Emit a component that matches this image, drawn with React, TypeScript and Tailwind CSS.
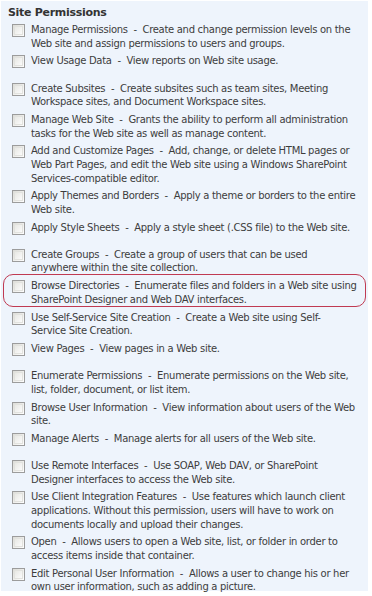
import React from 'react';

interface Permission {
  name: string;
  lines: string[];
  highlight?: boolean;
}

// wraps copied from the screenshot so lines break in the same places
const permissions: Permission[] = [
  { name: 'Manage Permissions', lines: ['Create and change permission levels on the', 'Web site and assign permissions to users and groups.'] },
  { name: 'View Usage Data', lines: ['View reports on Web site usage.'] },
  { name: 'Create Subsites', lines: ['Create subsites such as team sites, Meeting', 'Workspace sites, and Document Workspace sites.'] },
  { name: 'Manage Web Site', lines: ['Grants the ability to perform all administration', 'tasks for the Web site as well as manage content.'] },
  { name: 'Add and Customize Pages', lines: ['Add, change, or delete HTML pages or', 'Web Part Pages, and edit the Web site using a Windows SharePoint', 'Services-compatible editor.'] },
  { name: 'Apply Themes and Borders', lines: ['Apply a theme or borders to the entire', 'Web site.'] },
  { name: 'Apply Style Sheets', lines: ['Apply a style sheet (.CSS file) to the Web site.'] },
  { name: 'Create Groups', lines: ['Create a group of users that can be used', 'anywhere within the site collection.'] },
  { name: 'Browse Directories', lines: ['Enumerate files and folders in a Web site using', 'SharePoint Designer and Web DAV interfaces.'], highlight: true },
  { name: 'Use Self-Service Site Creation', lines: ['Create a Web site using Self-', 'Service Site Creation.'] },
  { name: 'View Pages', lines: ['View pages in a Web site.'] },
  { name: 'Enumerate Permissions', lines: ['Enumerate permissions on the Web site,', 'list, folder, document, or list item.'] },
  { name: 'Browse User Information', lines: ['View information about users of the Web', 'site.'] },
  { name: 'Manage Alerts', lines: ['Manage alerts for all users of the Web site.'] },
  { name: 'Use Remote Interfaces', lines: ['Use SOAP, Web DAV, or SharePoint', 'Designer interfaces to access the Web site.'] },
  { name: 'Use Client Integration Features', lines: ['Use features which launch client', 'applications. Without this permission, users will have to work on', 'documents locally and upload their changes.'] },
  { name: 'Open', lines: ['Allows users to open a Web site, list, or folder in order to', 'access items inside that container.'] },
  { name: 'Edit Personal User Information', lines: ['Allows a user to change his or her', 'own user information, such as adding a picture.'] },
];

function Checkbox() {
  return (
    <div className="w-[13px] h-[13px] border border-[#9c9c9c] bg-gradient-to-br from-[#dcdcd7] to-[#ffffff] p-[1px] shrink-0">
      <div className="w-full h-full border border-[#e2e2de] bg-gradient-to-br from-[#e8e8e4] to-[#fbfbfb]" />
    </div>
  );
}

function Row({ p }: { p: Permission }) {
  const body = (
    <div className="flex items-start min-h-[23px]">
      <div className="w-[30px] shrink-0 pl-[11px] pt-[1px]">
        <Checkbox />
      </div>
      <div className="leading-[13.6px] whitespace-pre tracking-[-0.3px]">
        {p.lines.map((line, i) => (
          <div key={i}>{i === 0 ? `${p.name}  -  ${line}` : line}</div>
        ))}
      </div>
    </div>
  );

  // red rounded outline drawn around the one row
  if (p.highlight) {
    return (
      <div className="mx-[2px] border border-[#c03a52] rounded-[10px] -mt-[5px] pt-[4px] -mb-[1px]">
        <div className="-ml-[3px]">{body}</div>
      </div>
    );
  }
  return body;
}

export default function App() {
  return (
    <div className="w-[372px] h-[596px] bg-white" style={{ fontFamily: '"DejaVu Sans", Verdana, sans-serif' }}>
      <div className="ml-[1px] mt-[1px] w-[367px] h-[590px] bg-[#eef4fc] text-[10px] text-[#3d3d3d]">
        <div className="pl-[7px] pt-[4px] font-bold text-[11px] text-[#333] leading-[15px] tracking-[-0.3px]">Site Permissions</div>
        <div className="flex flex-col gap-[4.2px] pt-[3px]">
          {permissions.map((p) => (
            <Row key={p.name} p={p} />
          ))}
        </div>
      </div>
    </div>
  );
}
